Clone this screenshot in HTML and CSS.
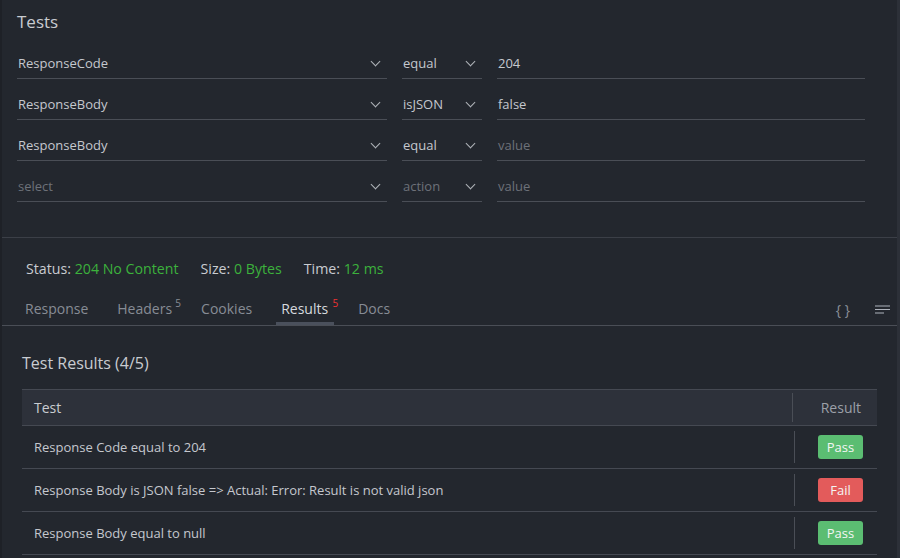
FILE: index.html
```html
<!DOCTYPE html>
<html lang="en">
<head>
  <meta charset="UTF-8">
  <title>Tests</title>
  <link rel="stylesheet" href="styles.css">
</head>
<body>

<div class="app">
  <div class="tests">
    <h2>Tests</h2>
    <div class="test-row">
      <div class="field select">ResponseCode <span class="chev"></span></div>
      <div class="field select">equal <span class="chev"></span></div>
      <div class="field">204</div>
    </div>
    <div class="test-row">
      <div class="field select">ResponseBody <span class="chev"></span></div>
      <div class="field select">isJSON <span class="chev"></span></div>
      <div class="field">false</div>
    </div>
    <div class="test-row">
      <div class="field select">ResponseBody <span class="chev"></span></div>
      <div class="field select">equal <span class="chev"></span></div>
      <div class="field empty">value</div>
    </div>
    <div class="test-row">
      <div class="field select empty">select <span class="chev"></span></div>
      <div class="field select empty">action <span class="chev"></span></div>
      <div class="field empty">value</div>
    </div>
  </div>

  <div class="response">
    <div class="status">
      <span>Status: <b>204 No Content</b></span>
      <span>Size: <b>0 Bytes</b></span>
      <span>Time: <b>12 ms</b></span>
    </div>

    <div class="tabs">
      <span class="tab">Response</span>
      <span class="tab">Headers<sup>5</sup></span>
      <span class="tab">Cookies</span>
      <span class="tab active">Results<sup class="red">5</sup></span>
      <span class="tab">Docs</span>
      <span class="tab-icons">
        <span class="braces">{ }</span>
        <svg width="15" height="10" viewBox="0 0 15 10">
          <path d="M0 1h15M0 4.5h15M0 8h9" stroke="#aeb3bc" stroke-width="1.2" fill="none"/>
        </svg>
      </span>
    </div>

    <div class="results">
      <h3>Test Results (4/5)</h3>
      <div class="table">
        <div class="tr head">
          <div class="td test">Test</div>
          <div class="td result">Result</div>
        </div>
        <div class="tr">
          <div class="td test">Response Code equal to 204</div>
          <div class="td result"><span class="badge pass">Pass</span></div>
        </div>
        <div class="tr">
          <div class="td test">Response Body is JSON false =&gt; Actual: Error: Result is not valid json</div>
          <div class="td result"><span class="badge fail">Fail</span></div>
        </div>
        <div class="tr">
          <div class="td test">Response Body equal to null</div>
          <div class="td result"><span class="badge pass">Pass</span></div>
        </div>
      </div>
    </div>
  </div>
</div>

</body>
</html>
```

FILE: styles.css
```css
body {
  margin: 0;
  background: #23272e;
  font-family: 'Open Sans', 'Noto Sans', sans-serif;
  color: #c5c8ce;
  font-size: 13px;
  height: 558px;
  overflow: hidden;
}
.app {
  border-left: 2px solid #1e2127;
  border-right: 3px solid #2c3038;
  height: 558px;
}
.tests {
  height: 237px;
  padding: 0 32px 0 15px;
  border-bottom: 1px solid #3b3f47;
}
.tests h2 {
  margin: 0;
  padding-top: 9px;
  height: 40px;
  font-size: 17px;
  font-weight: 400;
  line-height: 26px;
  color: #c9ccd1;
}
.test-row {
  display: grid;
  grid-template-columns: 370px 80px 1fr;
  gap: 15px;
  margin-bottom: 11px;
}
.field {
  height: 29px;
  border-bottom: 1px solid #4a4e56;
  display: flex;
  align-items: center;
  justify-content: space-between;
  padding: 0 2px 0 1px;
  line-height: 29px;
}
.field.empty {
  color: #6d7179;
}
.chev {
  width: 6px;
  height: 6px;
  border-right: 1px solid #b0b4ba;
  border-bottom: 1px solid #b0b4ba;
  transform: rotate(45deg);
  margin: -4px 6px 0 0;
}
.status {
  height: 60px;
  padding-left: 24px;
  display: flex;
  align-items: center;
  gap: 22px;
  font-size: 14.2px;
  color: #c9ccd1;
}
.status b {
  font-weight: 400;
  color: #3cb13c;
}
.tabs {
  display: flex;
  height: 27px;
  border-bottom: 1px solid #4a4e56;
  padding-left: 18px;
  gap: 19px;
  font-size: 14px;
}
.tab {
  position: relative;
  color: #878c95;
  height: 27px;
  line-height: 22px;
  padding: 0 5px 0 5px;
  box-sizing: border-box;
  border-bottom: 3px solid transparent;
}
.tab sup {
  position: absolute;
  top: -2px;
  right: -4px;
  font-size: 10px;
  line-height: 14px;
}
.tab sup.red {
  right: -4px;
  color: #f03232;
}
.tab.active {
  color: #d6d9de;
  border-bottom-color: #4a505c;
  padding-right: 6px;
}
.tab-icons {
  margin-left: auto;
  display: flex;
  align-items: center;
  gap: 25px;
  padding: 0 7px 4px 0;
}
.braces {
  color: #8a8f98;
  font-size: 14px;
}
.results {
  padding: 25px 20px 0 20px;
}
.results h3 {
  margin: 0 0 14px 0;
  font-size: 16px;
  font-weight: 400;
  line-height: 24px;
  color: #c9ccd1;
}
.table {
  width: 855px;
  border-top: 1px solid #454952;
}
.tr {
  display: flex;
  height: 42px;
  border-bottom: 1px solid #454952;
}
.tr.head {
  height: 35px;
  background: #2d313a;
}
.td.test {
  flex: 1;
  padding-left: 12px;
  display: flex;
  align-items: center;
}
.td.result {
  width: 68px;
  margin: 5px 0;
  border-left: 1px solid #4a4e56;
  display: flex;
  align-items: center;
  justify-content: flex-end;
  padding-right: 14px;
}
.head .td.result {
  margin: 3px 0;
  padding-right: 16px;
  color: #9ca0a8;
  font-size: 14px;
}
.head .td.test {
  font-size: 14px;
  color: #c9ccd1;
}
.badge {
  width: 45px;
  height: 24px;
  line-height: 24px;
  text-align: center;
  border-radius: 3px;
  color: #f4f6f4;
}
.pass {
  background: #5bbd72;
}
.fail {
  background: #e35b5b;
}
```
